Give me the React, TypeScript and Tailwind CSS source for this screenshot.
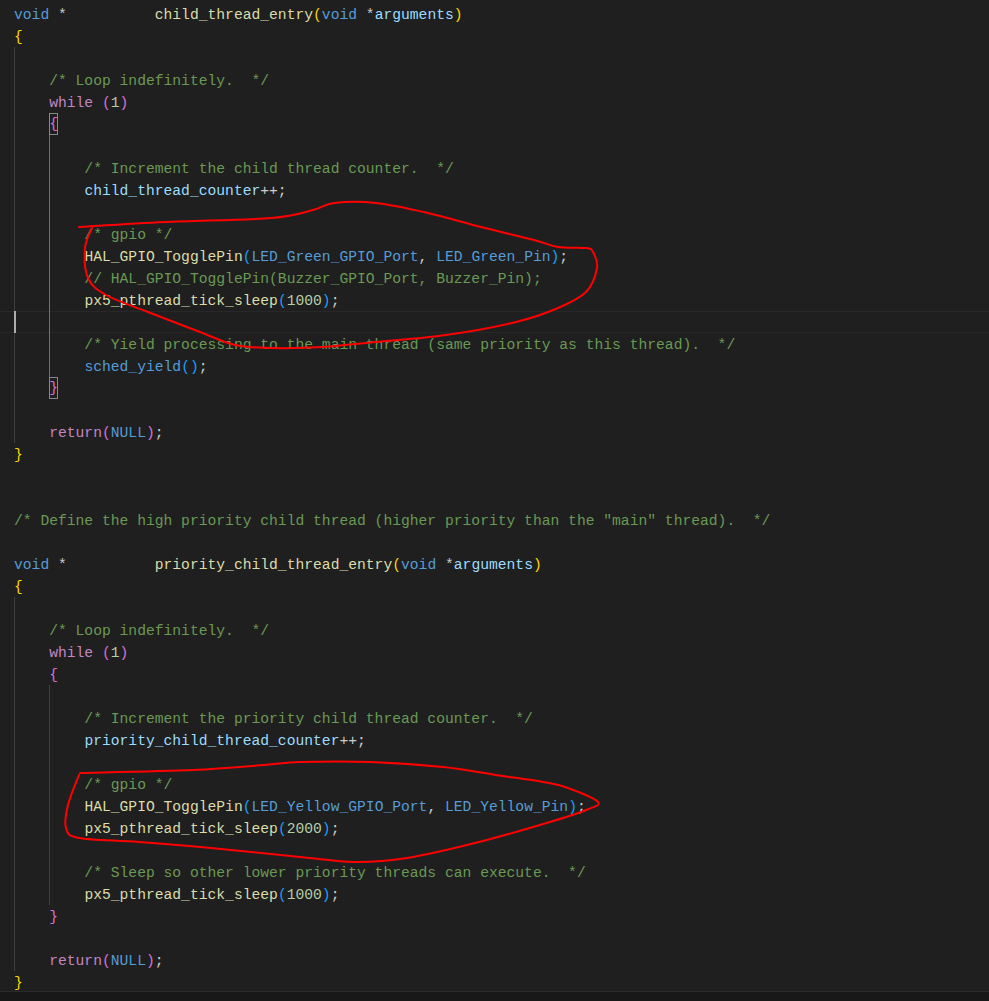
import React from "react";

type Tok = [string, string?];

const C = {
  kw: "text-[#569cd6]",
  fn: "text-[#dcdcaa]",
  b1: "text-[#ffd700]",
  b2: "text-[#da70d6]",
  b3: "text-[#179fff]",
  vr: "text-[#9cdcfe]",
  cm: "text-[#6a9955]",
  ct: "text-[#c586c0]",
  nm: "text-[#b5cea8]",
};

const I4 = "    ";
const I8 = "        ";

// each line: tokens, guides [col, active], match box flag
type Line = { t: Tok[]; g?: [number, boolean][]; box?: boolean; cur?: boolean };

const L = (t: Tok[], g?: [number, boolean][], extra?: Partial<Line>): Line => ({ t, g, ...extra });

const g0: [number, boolean][] = [[0, false]];
const g04a: [number, boolean][] = [[0, false], [4, true]];
const g04: [number, boolean][] = [[0, false], [4, false]];

const lines: Line[] = [
  L([["void", C.kw], [" *"], ["          "], ["child_thread_entry", C.fn], ["(", C.b1], ["void", C.kw], [" *"], ["arguments", C.vr], [")", C.b1]]),
  L([["{", C.b1]]),
  L([], g0),
  L([[I4 + "/* Loop indefinitely.  */", C.cm]], g0),
  L([[I4], ["while", C.ct], [" "], ["(", C.b2], ["1", C.nm], [")", C.b2]], g0),
  L([[I4], ["{", C.b2]], g0, { box: true }),
  L([], g04a),
  L([[I8 + "/* Increment the child thread counter.  */", C.cm]], g04a),
  L([[I8], ["child_thread_counter", C.vr], ["++;"]], g04a),
  L([], g04a),
  L([[I8 + "/* gpio */", C.cm]], g04a),
  L([[I8], ["HAL_GPIO_TogglePin", C.fn], ["(", C.b3], ["LED_Green_GPIO_Port", C.kw], [", "], ["LED_Green_Pin", C.kw], [")", C.b3], [";"]], g04a),
  L([[I8 + "// HAL_GPIO_TogglePin(Buzzer_GPIO_Port, Buzzer_Pin);", C.cm]], g04a),
  L([[I8], ["px5_pthread_tick_sleep", C.fn], ["(", C.b3], ["1000", C.nm], [")", C.b3], [";"]], g04a),
  L([], g04a, { cur: true }),
  L([[I8 + "/* Yield processing to the main thread (same priority as this thread).  */", C.cm]], g04a),
  L([[I8], ["sched_yield", C.kw], ["()", C.b3], [";"]], g04a),
  L([[I4], ["}", C.b2]], g0, { box: true }),
  L([], g0),
  L([[I4], ["return", C.ct], ["(", C.b2], ["NULL", C.kw], [")", C.b2], [";"]], g0),
  L([["}", C.b1]]),
  L([]),
  L([]),
  L([['/* Define the high priority child thread (higher priority than the "main" thread).  */', C.cm]]),
  L([]),
  L([["void", C.kw], [" *"], ["          "], ["priority_child_thread_entry", C.fn], ["(", C.b1], ["void", C.kw], [" *"], ["arguments", C.vr], [")", C.b1]]),
  L([["{", C.b1]]),
  L([], g0),
  L([[I4 + "/* Loop indefinitely.  */", C.cm]], g0),
  L([[I4], ["while", C.ct], [" "], ["(", C.b2], ["1", C.nm], [")", C.b2]], g0),
  L([[I4], ["{", C.b2]], g0),
  L([], g04),
  L([[I8 + "/* Increment the priority child thread counter.  */", C.cm]], g04),
  L([[I8], ["priority_child_thread_counter", C.vr], ["++;"]], g04),
  L([], g04),
  L([[I8 + "/* gpio */", C.cm]], g04),
  L([[I8], ["HAL_GPIO_TogglePin", C.fn], ["(", C.b3], ["LED_Yellow_GPIO_Port", C.kw], [", "], ["LED_Yellow_Pin", C.kw], [")", C.b3], [";"]], g04),
  L([[I8], ["px5_pthread_tick_sleep", C.fn], ["(", C.b3], ["2000", C.nm], [")", C.b3], [";"]], g04),
  L([], g04),
  L([[I8 + "/* Sleep so other lower priority threads can execute.  */", C.cm]], g04),
  L([[I8], ["px5_pthread_tick_sleep", C.fn], ["(", C.b3], ["1000", C.nm], [")", C.b3], [";"]], g04),
  L([[I4], ["}", C.b2]], g0),
  L([], g0),
  L([[I4], ["return", C.ct], ["(", C.b2], ["NULL", C.kw], [")", C.b2], [";"]], g0),
  L([["}", C.b1]]),
];

// hand drawn red marks, points traced from the screenshot
const ring1: [number, number][] = [
  [79, 227], [165, 222], [271, 218], [313, 210], [334, 203], [376, 203], [428, 213], [481, 227],
  [534, 240], [558, 247], [586, 248], [593, 252], [597, 268], [586, 292], [558, 308], [516, 322],
  [446, 335], [376, 342], [323, 347], [271, 348], [235, 345], [200, 332], [148, 312], [106, 295],
  [88, 278], [85, 248], [92, 228],
];
const ring2: [number, number][] = [
  [80, 773], [193, 770], [264, 765], [300, 762], [371, 762], [443, 767], [496, 775], [543, 782],
  [568, 788], [598, 802], [586, 810], [550, 822], [479, 842], [407, 858], [354, 862], [300, 857],
  [211, 848], [139, 842], [79, 838], [66, 828], [68, 805], [79, 775],
];

function smooth(p: [number, number][]) {
  let d = `M${p[0][0]},${p[0][1]}`;
  for (let i = 0; i < p.length - 1; i++) {
    const a = p[i - 1] || p[i];
    const b = p[i];
    const c = p[i + 1];
    const e = p[i + 2] || c;
    const c1x = b[0] + (c[0] - a[0]) / 6;
    const c1y = b[1] + (c[1] - a[1]) / 6;
    const c2x = c[0] - (e[0] - b[0]) / 6;
    const c2y = c[1] - (e[1] - b[1]) / 6;
    d += ` C${c1x},${c1y} ${c2x},${c2y} ${c[0]},${c[1]}`;
  }
  return d;
}

function CodeLine({ line }: { line: Line }) {
  return (
    <div
      className={
        "relative h-[22px] leading-[22px] whitespace-pre pl-[14px] pt-px box-border " +
        (line.cur ? "shadow-[inset_0_1px_0_#282828,inset_0_-1px_0_#282828]" : "")
      }
    >
      {line.g?.map(([col, active]) => (
        <span
          key={col}
          className={
            "absolute top-0 h-full w-px " +
            (col === 0 ? "left-[14px] " : "left-[49px] ") +
            (active ? "bg-[#707070]" : "bg-[#404040]")
          }
        />
      ))}
      {line.cur && <span className="absolute left-[14px] top-0 h-full w-[2px] bg-[#aeafad]" />}
      {line.t.map(([s, cls], i) =>
        line.box && (s === "{" || s === "}") ? (
          <span
            key={i}
            className={"relative -top-px inline-block align-top h-[22px] shadow-[inset_0_0_0_1px_#888888] " + cls}
          >
            {s}
          </span>
        ) : (
          <span key={i} className={cls || "text-[#cccccc]"}>
            {s}
          </span>
        )
      )}
    </div>
  );
}

export default function App() {
  return (
    <div className="relative w-[989px] h-[1001px] overflow-hidden bg-[#181818]">
      <div className="h-[992px] bg-[#1f1f1f] border-b border-[#2b2b2b] pt-[3px] font-['Liberation_Mono',monospace] text-[14.67px] text-[#cccccc]">
        {lines.map((l, i) => (
          <CodeLine key={i} line={l} />
        ))}
      </div>
      {/* red annotations */}
      <svg className="absolute inset-0 pointer-events-none" width="989" height="1001">
        <path d={smooth(ring1)} fill="none" stroke="#ff0000" strokeWidth="2" strokeLinecap="round" strokeLinejoin="round" />
        <path d={smooth(ring2)} fill="none" stroke="#ff0000" strokeWidth="2" strokeLinecap="round" strokeLinejoin="round" />
      </svg>
    </div>
  );
}
